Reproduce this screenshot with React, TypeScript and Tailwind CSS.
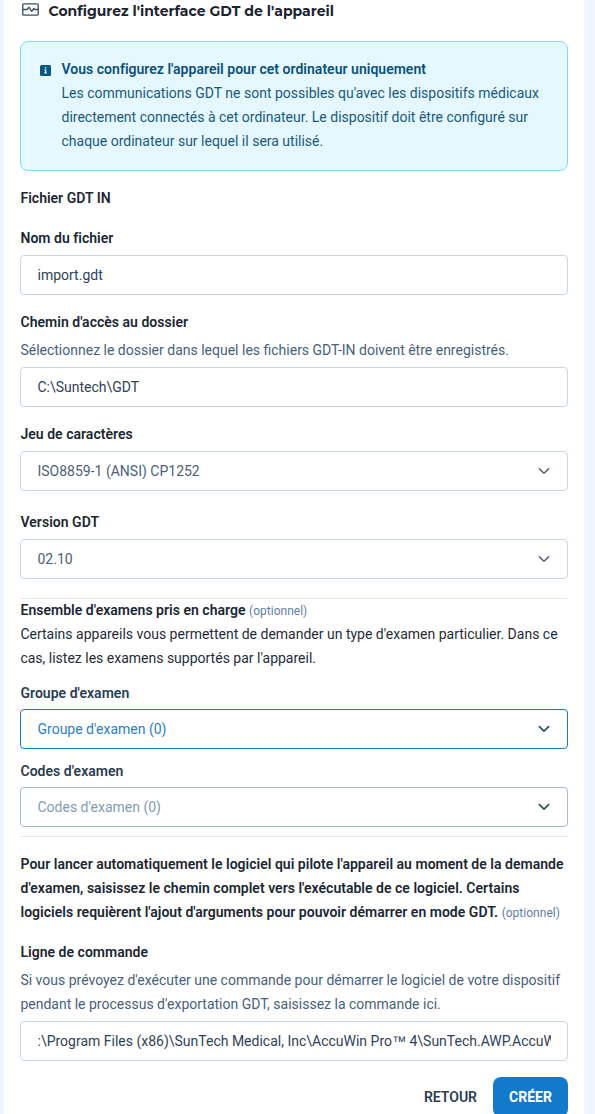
import { useState, type ReactNode } from 'react';
import clsx from 'clsx';

const Chevron = ({ bold = false }: { bold?: boolean }) => (
  <svg
    width="12"
    height="8"
    viewBox="0 0 12 8"
    fill="none"
    stroke={bold ? '#334b63' : '#475f78'}
    strokeWidth={bold ? 1.7 : 1.4}
    strokeLinecap="round"
    strokeLinejoin="round"
    className="shrink-0"
  >
    <path d="M1.4 1.7 6 6.2l4.6-4.5" />
  </svg>
);

const MonitorIcon = () => (
  <svg width="17" height="13" viewBox="0 0 17 13" fill="none" stroke="#3a4c60" strokeWidth="1.3" strokeLinejoin="round">
    <rect x="0.8" y="0.8" width="15.4" height="11.4" rx="1" />
    <path d="M1 6.5h4l2-2.3 2.7 4.1 2.1-2.8.9 1H16" />
  </svg>
);

const InfoIcon = () => (
  <svg width="11" height="11" viewBox="0 0 11 11" className="mt-[8px] shrink-0">
    <rect width="11" height="11" rx="1.5" fill="#075985" />
    <path d="M5 2.2h1.4v1.3H5zM4.2 4.6h2.1v2.9H7v.9H4.1v-.9h.9v-2h-.8z" fill="#e6f8ff" />
  </svg>
);

const Label = ({ children, muted = false }: { children: ReactNode; muted?: boolean }) => (
  <div className={clsx('pl-[0.5px] font-semibold tracking-[0.02px]', muted ? 'text-[#2b3d51]' : 'text-[#1b2733]')}>
    {children}
  </div>
);

const Hint = ({ children }: { children: ReactNode }) => (
  <p className="mt-1 pl-[0.4px] text-[#475f7b]">{children}</p>
);

const TextInput = ({ initial }: { initial: string }) => {
  const [value, setValue] = useState(initial);

  return (
    <input
      value={value}
      onChange={(e) => setValue(e.target.value)}
      className="mt-[5px] block h-10 w-full rounded border border-[#c8d7e6] bg-white pr-4 pl-[16.5px] text-[#2f4258] outline-none"
    />
  );
};

const variants = {
  default: 'mt-[5px] border-[#c8d7e6] text-[#4b6078]',
  active: 'mt-1 border-[#117acb] text-[#2d7dc4]',
  empty: 'mt-1 border-[#a5bbd1] text-[#7f9bbb]',
};

const Select = ({ text, variant = 'default' }: { text: string; variant?: keyof typeof variants }) => (
  <button
    type="button"
    className={clsx(
      'flex h-10 w-full items-center justify-between rounded border bg-white pr-[17px] pl-[16.5px] text-left',
      variants[variant]
    )}
  >
    <span>{text}</span>
    <Chevron bold={variant !== 'default'} />
  </button>
);

const Optional = () => (
  <span className="text-[12px] leading-none font-normal text-[#5f7ea3]">(optionnel)</span>
);

export default function App() {
  return (
    <div className="h-[1114px] w-[595px] overflow-hidden bg-[#eff6ff] pr-[11px] pl-1 font-['Roboto',sans-serif] text-[14px] leading-6 text-[#1f2c3a]">
      <main className="h-full bg-white px-4">
        <header className="flex h-[41px] items-start gap-[10px] pl-[1.5px]">
          <div className="pt-[2.5px]">
            <MonitorIcon />
          </div>
          <h1 className="-mt-px font-['Montserrat','Inter',sans-serif] text-[14px] font-bold whitespace-nowrap text-[#1b2430]">
            Configurez l'interface GDT de l'appareil
          </h1>
        </header>

        <section className="flex h-[130px] gap-[11px] rounded-lg border border-[#7adcf8] bg-[#e5f8ff] pt-[15px] pr-4 pl-[18.5px] text-[#1b5878]">
          <InfoIcon />
          <div>
            <p className="font-semibold tracking-[0.02px] text-[#0b5178]">
              Vous configurez l'appareil pour cet ordinateur uniquement
            </p>
            <p>
              Les communications GDT ne sont possibles qu'avec les dispositifs médicaux
              <br />
              directement connectés à cet ordinateur. Le dispositif doit être configuré sur
              <br />
              chaque ordinateur sur lequel il sera utilisé.
            </p>
          </div>
        </section>

        <h2 className="mt-[15px] pl-[0.5px] font-semibold text-[#1b2733]">Fichier GDT IN</h2>

        <div className="mt-4">
          <Label>Nom du fichier</Label>
          <TextInput initial="import.gdt" />
        </div>

        <div className="mt-[15px]">
          <Label>Chemin d'accès au dossier</Label>
          <Hint>Sélectionnez le dossier dans lequel les fichiers GDT-IN doivent être enregistrés.</Hint>
          <TextInput initial="C:\Suntech\GDT" />
        </div>

        <div className="mt-[15px]">
          <Label>Jeu de caractères</Label>
          <Select text="ISO8859-1 (ANSI) CP1252" />
        </div>

        <div className="mt-[19px]">
          <Label>Version GDT</Label>
          <Select text="02.10" />
        </div>

        {/* Supported exams */}
        <section className="mt-[19px] border-t border-[#e2ebf4]">
          <div className="-mt-px">
            <Label>
              Ensemble d'examens pris en charge <Optional />
            </Label>
            <p className="pl-[0.4px]">
              Certains appareils vous permettent de demander un type d'examen particulier. Dans ce
              <br />
              cas, listez les examens supportés par l'appareil.
            </p>
          </div>

          <div className="mt-[11px]">
            <Label muted>Groupe d'examen</Label>
            <Select text="Groupe d'examen (0)" variant="active" />
          </div>

          <div className="mt-[10px]">
            <Label muted>Codes d'examen</Label>
            <Select text="Codes d'examen (0)" variant="empty" />
          </div>
        </section>

        {/* Command line */}
        <section className="mt-[9px] border-t border-[#e2ebf4] pt-[15px]">
          <p className="pl-[0.5px] font-semibold tracking-[0.02px] whitespace-nowrap text-[#1b2733]">
            Pour lancer automatiquement le logiciel qui pilote l'appareil au moment de la demande
            <br />
            d'examen, saisissez le chemin complet vers l'exécutable de ce logiciel. Certains
            <br />
            logiciels requièrent l'ajout d'arguments pour pouvoir démarrer en mode GDT. <Optional />
          </p>

          <div className="mt-4">
            <Label>Ligne de commande</Label>
            <Hint>
              Si vous prévoyez d'exécuter une commande pour démarrer le logiciel de votre dispositif
              <br />
              pendant le processus d'exportation GDT, saisissez la commande ici.
            </Hint>
            <div className="mt-[5px] h-10 rounded border border-[#c8d7e6] pt-[7px] pr-4 pl-[16.5px] text-[#2f4258]">
              <div className="h-6 overflow-hidden whitespace-nowrap">
                :\Program Files (x86)\SunTech Medical, Inc\AccuWin Pro
                <span className="font-['Liberation_Sans',sans-serif] leading-none">™</span>
                {' 4\\SunTech.AWP.AccuWin.exe'}
              </div>
            </div>
          </div>
        </section>

        <footer className="mt-4 flex items-center justify-end gap-4">
          <button type="button" className="font-semibold text-[#2b3d51]">
            RETOUR
          </button>
          <button type="button" className="h-10 w-[75px] rounded-lg bg-[#117acb] font-bold text-white">
            CRÉER
          </button>
        </footer>
      </main>
    </div>
  );
}
